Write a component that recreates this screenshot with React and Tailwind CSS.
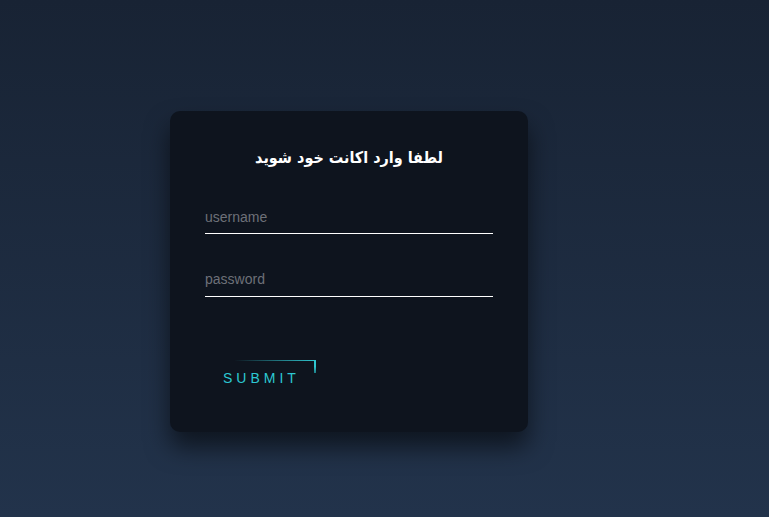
export default function App() {
  return (
    <div
      className="min-h-[517px] w-full bg-gradient-to-b from-[#182334] to-[#22334b] pt-[111px] pl-[170px]"
      style={{ fontFamily: '"Liberation Sans", "DejaVu Sans", Arial, sans-serif' }}
    >
      <div className="w-[358px] h-[321px] rounded-[10px] bg-[#0e141e] px-[35px] pt-[37px] shadow-[0_15px_25px_rgba(0,0,0,0.55)]">
        <h2
          dir="rtl"
          className="text-center text-[16px] leading-[20px] font-bold text-white"
          style={{ fontFamily: '"DejaVu Sans Condensed", "DejaVu Sans", sans-serif' }}
        >
          لطفا وارد اکانت خود شوید
        </h2>
        <div className="mt-[31px]">
          <input
            type="text"
            placeholder="username"
            className="block w-full bg-transparent border-0 border-b border-white pt-[10px] pb-[8px] text-[14px] leading-[16px] text-white placeholder:text-[#6d7078] outline-none"
          />
        </div>
        <div className="mt-[28px]">
          <input
            type="password"
            placeholder="password"
            className="block w-full bg-transparent border-0 border-b border-white pt-[9px] pb-[9px] text-[14px] leading-[16px] text-white placeholder:text-[#6d7078] outline-none"
          />
        </div>
        <div className="mt-[63px]">
          <button className="relative inline-block overflow-hidden bg-transparent px-[16px] py-[10px] text-[14px] leading-[16px] tracking-[4px] text-[#2cc8d3] ml-[2px]">
            <span className="absolute left-0 top-0 h-[1px] w-full bg-[linear-gradient(90deg,transparent_25%,#2fc6d0)]"></span>
            <span className="absolute right-0 top-0 h-[13px] w-[2px] bg-gradient-to-b from-[#2fc6d0] via-[#2fc6d0] to-[#1d7f88]"></span>
            SUBMIT
          </button>
        </div>
      </div>
    </div>
  );
}
